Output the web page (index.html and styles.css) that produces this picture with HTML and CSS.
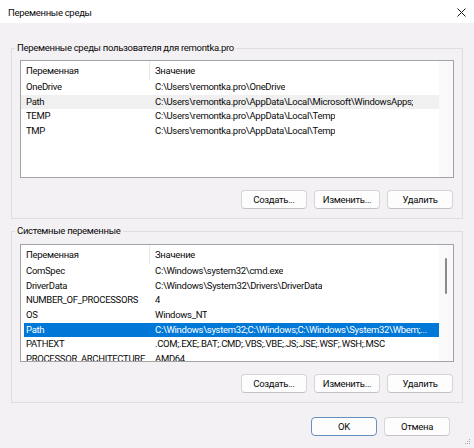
FILE: index.html
```html
<!DOCTYPE html>
<html lang="ru">
<head>
<meta charset="utf-8">
<title>Переменные среды</title>
<link rel="stylesheet" href="styles.css">
</head>
<body>
<div class="window">
  <div class="titlebar">
    <span class="title">Переменные среды</span>
    <svg class="close" width="9" height="9" viewBox="0 0 9 9"><path d="M0.5 0.5 L8.5 8.5 M8.5 0.5 L0.5 8.5" stroke="#1b1b1b" stroke-width="1"/></svg>
  </div>
  <div class="content">
    <fieldset class="group">
      <legend>Переменные среды пользователя для remontka.pro</legend>
      <div class="list">
        <div class="list-body">
          <div class="row head"><span class="c1">Переменная</span><span class="c2">Значение</span></div>
          <div class="row"><span class="c1">OneDrive</span><span class="c2">C:\Users\remontka.pro\OneDrive</span></div>
          <div class="row hover"><span class="c1">Path</span><span class="c2">C:\Users\remontka.pro\AppData\Local\Microsoft\WindowsApps;</span></div>
          <div class="row"><span class="c1">TEMP</span><span class="c2">C:\Users\remontka.pro\AppData\Local\Temp</span></div>
          <div class="row"><span class="c1">TMP</span><span class="c2">C:\Users\remontka.pro\AppData\Local\Temp</span></div>
        </div>
        <div class="scrollbar"></div>
      </div>
      <div class="buttons">
        <button class="btn">Создать...</button>
        <button class="btn">Изменить...</button>
        <button class="btn">Удалить</button>
      </div>
    </fieldset>
    <fieldset class="group second">
      <legend>Системные переменные</legend>
      <div class="list">
        <div class="list-body">
          <div class="row head"><span class="c1">Переменная</span><span class="c2">Значение</span></div>
          <div class="row"><span class="c1">ComSpec</span><span class="c2">C:\Windows\system32\cmd.exe</span></div>
          <div class="row"><span class="c1">DriverData</span><span class="c2">C:\Windows\System32\Drivers\DriverData</span></div>
          <div class="row"><span class="c1">NUMBER_OF_PROCESSORS</span><span class="c2">4</span></div>
          <div class="row"><span class="c1">OS</span><span class="c2">Windows_NT</span></div>
          <div class="row selected"><span class="c1">Path</span><span class="c2">C:\Windows\system32;C:\Windows;C:\Windows\System32\Wbem;...</span></div>
          <div class="row"><span class="c1">PATHEXT</span><span class="c2">.COM;.EXE;.BAT;.CMD;.VBS;.VBE;.JS;.JSE;.WSF;.WSH;.MSC</span></div>
          <div class="row"><span class="c1">PROCESSOR_ARCHITECTURE</span><span class="c2">AMD64</span></div>
        </div>
        <div class="scrollbar"><div class="thumb"></div></div>
      </div>
      <div class="buttons">
        <button class="btn">Создать...</button>
        <button class="btn">Изменить...</button>
        <button class="btn">Удалить</button>
      </div>
    </fieldset>
    <div class="footer">
      <button class="btn default">OK</button>
      <button class="btn">Отмена</button>
    </div>
  </div>
  <svg class="grip" width="6" height="6" viewBox="0 0 6 6"><rect x="4" y="0" width="1" height="1" fill="#a8a8a8"/><rect x="2" y="2" width="1" height="1" fill="#a8a8a8"/><rect x="4" y="2" width="1" height="1" fill="#a8a8a8"/><rect x="0" y="4" width="1" height="1" fill="#a8a8a8"/><rect x="2" y="4" width="1" height="1" fill="#a8a8a8"/><rect x="4" y="4" width="1" height="1" fill="#a8a8a8"/></svg>
</div>
</body>
</html>
```
FILE: styles.css
```css
html, body {
  margin: 0;
  padding: 0;
}
body {
  font-family: Roboto, "Noto Sans", sans-serif;
  font-size: 9.5px;
  letter-spacing: -0.3px;
  color: #0a0a0a;
  background: #f3f1f4;
}
.window {
  position: relative;
  width: 474px;
  height: 448px;
  background: #f3f1f4;
  overflow: hidden;
}
.titlebar {
  height: 23px;
  background: #ffffff;
  display: flex;
  align-items: center;
  justify-content: space-between;
  padding: 2px 8px 0 8px;
  box-sizing: border-box;
}
.content {
  padding: 17px 11px 0 11px;
}
.group {
  margin: 0;
  border: 1px solid #e0dde1;
  padding: 4px 8px 9px 8px;
  min-inline-size: 0;
}
.group.second {
  margin-top: 4px;
}
.group legend {
  padding: 0 2px;
  margin-left: -5px;
  line-height: 16px;
}
.list {
  height: 118px;
  box-sizing: border-box;
  border: 1px solid #a3a3a5;
  background: #ffffff;
  display: flex;
  overflow: hidden;
}
.second .list {
  margin-top: 1px;
}
.list-body {
  flex: 1;
  min-width: 0;
}
.scrollbar {
  width: 14px;
  background: #f9f9f9;
  position: relative;
}
.thumb {
  position: absolute;
  left: 6px;
  top: 13px;
  width: 2px;
  height: 36px;
  background: #8a8a8a;
  border-radius: 1px;
}
.row {
  display: flex;
  height: 14.7px;
  line-height: 14.7px;
  white-space: nowrap;
}
.row.head {
  height: 19px;
  line-height: 19px;
}
.c1 {
  width: 129px;
  flex: none;
  padding-left: 5px;
  box-sizing: border-box;
  overflow: hidden;
}
.c2 {
  padding-left: 5px;
  overflow: hidden;
  text-overflow: ellipsis;
}
.head .c1 {
  border-right: 1px solid #e8e8e8;
}
.row.hover {
  background: #f0f0f0;
}
.row.selected {
  background: #0078d7;
  color: #ffffff;
  margin-left: 3px;
}
.row.selected .c1 {
  width: 126px;
  padding-left: 2px;
}
.buttons {
  display: flex;
  justify-content: flex-end;
  gap: 7px;
  margin-top: 12px;
  padding-right: 1px;
}
.btn {
  width: 66px;
  height: 19px;
  padding: 0;
  font-family: inherit;
  font-size: 9.5px;
  letter-spacing: -0.3px;
  color: #0a0a0a;
  background: #fdfdfd;
  border: 1px solid #d6d4d7;
  border-bottom-color: #c4c2c5;
  border-radius: 4px;
}
.btn.default {
  border-color: #6690bd;
}
.footer {
  display: flex;
  justify-content: flex-end;
  gap: 7px;
  margin-top: 14px;
  padding-right: 13px;
}
.grip {
  position: absolute;
  right: 3px;
  bottom: 3px;
}
```
